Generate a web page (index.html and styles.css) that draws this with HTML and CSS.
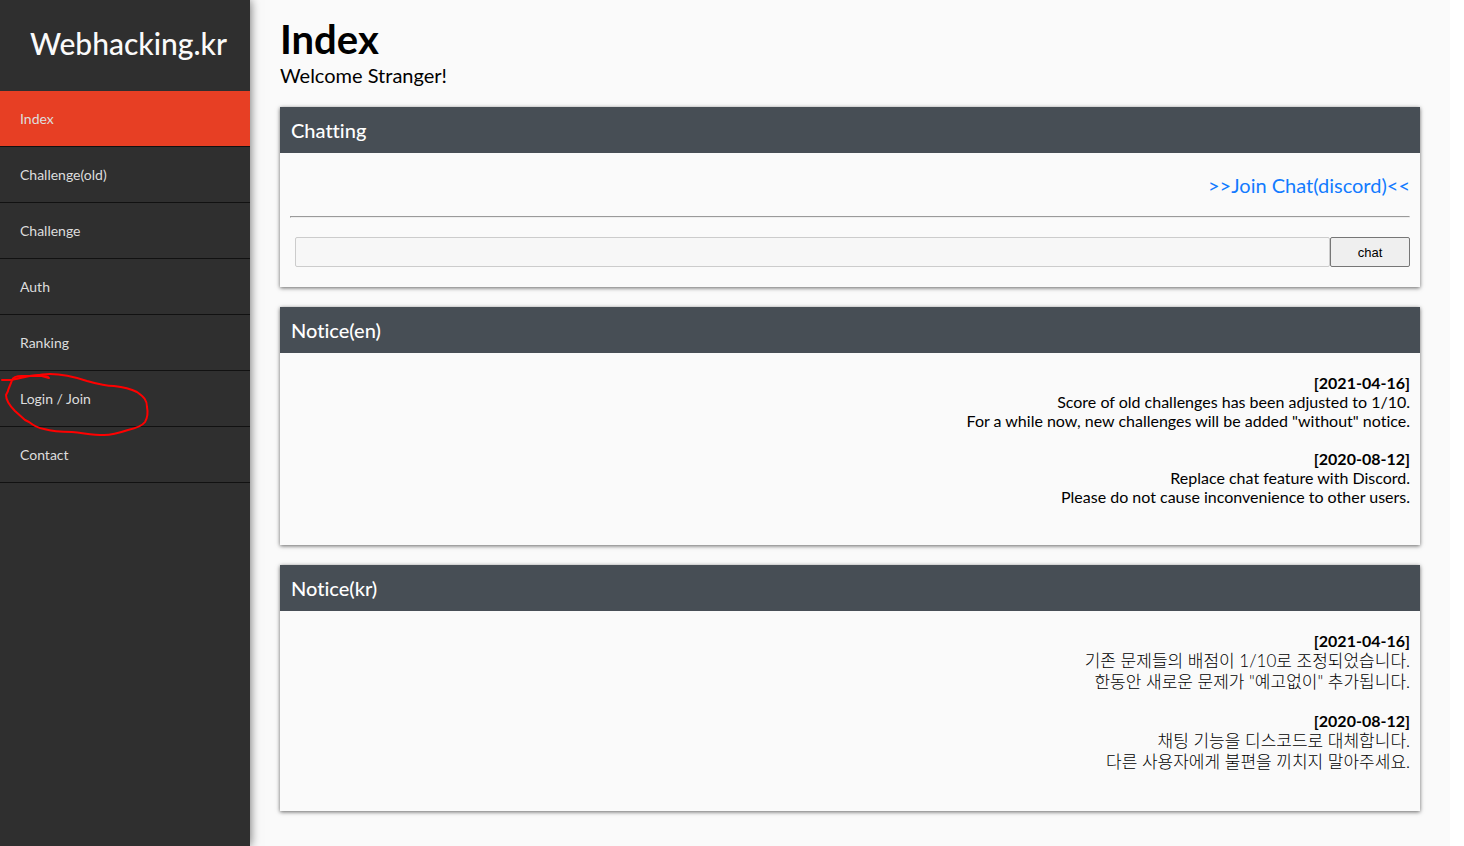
FILE: index.html
```html
<!DOCTYPE html>
<html lang="ko">
<head>
  <meta charset="UTF-8">
  <title>Webhacking.kr</title>
  <link rel="stylesheet" href="styles.css">
</head>
<body>
  <div class="page">
    <nav class="sidebar">
      <div class="brand">Webhacking.kr</div>
      <ul class="menu">
        <li><a class="active" href="#">Index</a></li>
        <li><a href="#">Challenge(old)</a></li>
        <li><a href="#">Challenge</a></li>
        <li><a href="#">Auth</a></li>
        <li><a href="#">Ranking</a></li>
        <li class="marked">
          <a href="#">Login / Join</a>
          <svg class="marker" width="160" height="70" viewBox="0 0 160 70" aria-hidden="true">
            <path d="M2 9 L11 9 C18 8 30 4 38 4 L49 7 M48 6 C42 4 30 5 22 5 C16 5 13 6 12 9 C11 13 8 18 8 20 L6 24 C6 29 9 34 15 40 L25 49 L29 51 C34 55 38 57 44 58 C54 61 62 61 72 61 C84 62 92 64 104 64 C112 64 122 61 128 59 C137 57 142 55 145 51 C148 46 148 41 147 36 C147 29 144 26 137 21 C129 17 123 16 114 15 C104 15 94 12 87 10 C75 6 64 3 50 3 C43 3 38 4 34 5" />
          </svg>
        </li>
        <li><a href="#">Contact</a></li>
      </ul>
    </nav>

    <main class="content">
      <h1 class="title">Index</h1>
      <div class="welcome">Welcome Stranger!</div>

      <section class="card">
        <h2 class="card-title">Chatting</h2>
        <div class="card-body">
          <a class="discord" href="#">&gt;&gt;Join Chat(discord)&lt;&lt;</a>
          <hr>
          <form class="chat-form">
            <input type="text" class="chat-input" aria-label="chat message" disabled>
            <button type="button" class="chat-button">chat</button>
          </form>
        </div>
      </section>

      <section class="card">
        <h2 class="card-title">Notice(en)</h2>
        <div class="card-body notice">
          <div class="date">[2021-04-16]</div>
          <p>
            Score of old challenges has been adjusted to 1/10.<br>
            For a while now, new challenges will be added "without" notice.
          </p>
          <div class="date">[2020-08-12]</div>
          <p>
            Replace chat feature with Discord.<br>
            Please do not cause inconvenience to other users.
          </p>
        </div>
      </section>

      <section class="card">
        <h2 class="card-title">Notice(kr)</h2>
        <div class="card-body notice notice-kr">
          <div class="date">[2021-04-16]</div>
          <p>
            기존 문제들의 배점이 1/10로 조정되었습니다.<br>
            한동안 새로운 문제가 "예고없이" 추가됩니다.
          </p>
          <div class="date">[2020-08-12]</div>
          <p>
            채팅 기능을 디스코드로 대체합니다.<br>
            다른 사용자에게 불편을 끼치지 말아주세요.
          </p>
        </div>
      </section>
    </main>
  </div>
</body>
</html>
```

FILE: styles.css
```css
* {
  box-sizing: border-box;
}

body {
  margin: 0;
  background: #fff;
  color: #000;
  font-family: Lato, "Noto Sans CJK KR", sans-serif;
  font-size: 16px;
  font-variant-ligatures: none;
}

.page {
  display: flex;
  min-height: 100vh;
  margin-right: 14px;
  background: #fafafa;
}

.sidebar {
  flex: 0 0 250px;
  background: #2f2f2f;
  box-shadow: 0 0 10px rgba(0, 0, 0, 0.6);
}

.brand {
  padding: 23px 20px 28px 30px;
  color: #fafafa;
  font-size: 30px;
  font-weight: 500;
  line-height: 40px;
}

.menu {
  margin: 0;
  padding: 0;
  list-style: none;
}

.menu a {
  display: block;
  padding: 18px 20px 17px;
  border-bottom: 1px solid #111;
  color: #ddd;
  font-size: 14px;
  line-height: 20px;
  text-decoration: none;
}

.menu .active {
  background: #e73f24;
}

.marked {
  position: relative;
}

.marker {
  position: absolute;
  top: 0;
  left: 0;
  fill: none;
  stroke: #f00;
  stroke-width: 2;
  stroke-linecap: round;
  stroke-linejoin: round;
  pointer-events: none;
}

.content {
  flex: 1;
  min-width: 0;
  padding: 15px 30px;
}

.title {
  margin: 0;
  font-size: 40px;
  line-height: 48px;
}

.welcome {
  margin-bottom: 20px;
  font-size: 20px;
  line-height: 24px;
}

.card {
  margin-bottom: 20px;
  background: #fafafa;
  box-shadow: 0 1px 4px rgba(0, 0, 0, 0.6);
}

.card-title {
  margin: 0;
  padding: 11px;
  background: #474e55;
  color: #fff;
  font-size: 20px;
  font-weight: 500;
  line-height: 24px;
}

.card-body {
  padding: 20px 10px;
  text-align: right;
}

.discord {
  color: #127bff;
  font-size: 20px;
  line-height: 24px;
  text-decoration: none;
}

hr {
  margin: 19px 0;
}

.chat-form {
  display: flex;
  padding-left: 5px;
}

.chat-input {
  flex: 1;
  height: 30px;
  border: 1px solid #ccc;
  border-radius: 2px;
  background: #f7f7f7;
}

.chat-button {
  width: 80px;
  height: 30px;
  border: 1px solid #767676;
  border-radius: 2px;
  background: #efefef;
  color: #000;
  font-family: "Liberation Sans", Arial, sans-serif;
  font-size: 13px;
}

.notice {
  line-height: 19px;
}

.notice .date {
  font-weight: bold;
}

.notice p {
  margin: 0 0 19px;
}

.notice-kr p {
  font-size: 17px;
  font-weight: 300;
  line-height: 21px;
}
```
